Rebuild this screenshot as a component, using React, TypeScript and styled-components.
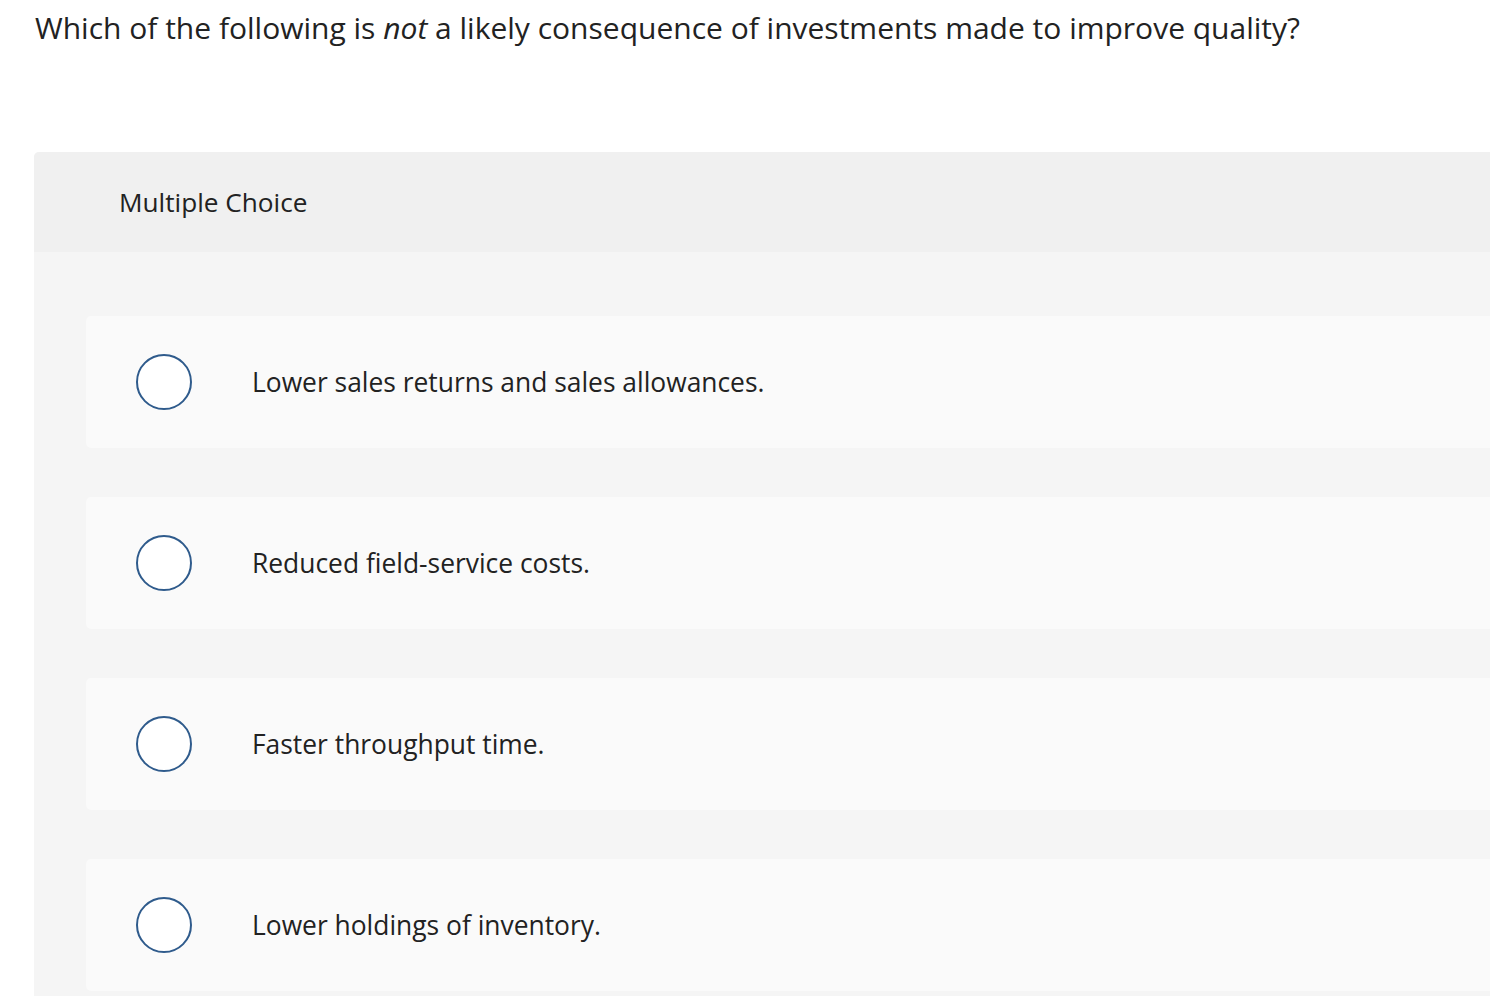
import React from 'react';
import styled, { createGlobalStyle } from 'styled-components';

const GlobalStyle = createGlobalStyle`
  html, body {
    margin: 0;
    padding: 0;
    background: #fff;
    overflow: hidden;
  }
  body {
    font-family: "Open Sans", Lato, Arial, sans-serif;
    font-variant-ligatures: none;
    color: #222;
  }
`;

const Page = styled.div`
  width: 1490px;
  height: 996px;
  overflow: hidden;
  padding: 8px 0 0 35px;
  box-sizing: border-box;
`;

const Question = styled.p`
  margin: 0;
  font-size: 30px;
  line-height: 40px;
  color: #222;
  white-space: nowrap;
  em {
    font-style: italic;
  }
`;

const Panel = styled.section`
  margin: 104px 0 0 -1px;
  width: 1600px;
  border-radius: 5px 0 0 0;
  background: #f5f5f5;
  overflow: hidden;
`;

const PanelHeader = styled.header`
  height: 100px;
  display: flex;
  align-items: center;
  padding-left: 85px;
  background: #f0f0f0;
  font-size: 26.2px;
  color: #222;
`;

const OptionList = styled.div`
  display: flex;
  flex-direction: column;
  gap: 49px;
  padding: 64px 0 40px 52px;
`;

const OptionCard = styled.label`
  height: 132px;
  display: flex;
  align-items: center;
  background: #fafafa;
  border-radius: 5px 0 0 5px;
  padding-left: 50px;
  cursor: pointer;
`;

const Radio = styled.span`
  width: 52px;
  height: 52px;
  border: 2px solid #2f5b8c;
  border-radius: 50%;
  background: #fff;
  flex-shrink: 0;
`;

const OptionText = styled.span`
  margin-left: 60px;
  font-size: 26.4px;
  color: #222;
`;

const options = [
  'Lower sales returns and sales allowances.',
  'Reduced field-service costs.',
  'Faster throughput time.',
  'Lower holdings of inventory.',
];

const App: React.FC = () => {
  return (
    <>
      <GlobalStyle />
      <Page>
        <Question>
          Which of the following is <em>not</em> a likely consequence of investments made to improve quality?
        </Question>
        <Panel>
          <PanelHeader>Multiple Choice</PanelHeader>
          <OptionList>
            {options.map((text) => (
              <OptionCard key={text}>
                <Radio />
                <OptionText>{text}</OptionText>
              </OptionCard>
            ))}
          </OptionList>
        </Panel>
      </Page>
    </>
  );
};

export default App;
